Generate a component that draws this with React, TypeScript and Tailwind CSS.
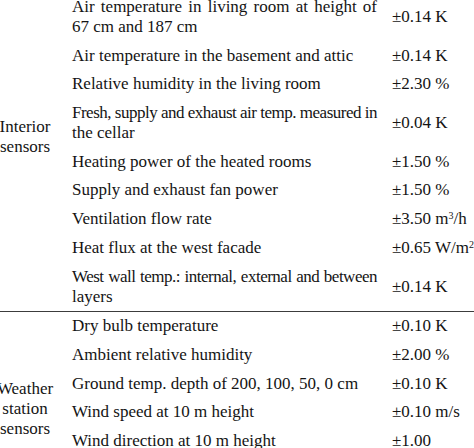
import React from 'react'

type Row = { label: string | [string, string]; tight?: boolean; value: React.ReactNode }

const interior: Row[] = [
  { label: ['Air temperature in living room at height of', '67 cm and 187 cm'], value: '±0.14 K' },
  { label: 'Air temperature in the basement and attic', value: '±0.14 K' },
  { label: 'Relative humidity in the living room', value: '±2.30 %' },
  { label: ['Fresh, supply and exhaust air temp. measured in', 'the cellar'], tight: true, value: '±0.04 K' },
  { label: 'Heating power of the heated rooms', value: '±1.50 %' },
  { label: 'Supply and exhaust fan power', value: '±1.50 %' },
  {
    label: 'Ventilation flow rate',
    value: (
      <>
        ±3.50 m<sup className="text-[10px]">3</sup>/h
      </>
    ),
  },
  {
    label: 'Heat flux at the west facade',
    value: (
      <>
        ±0.65 W/m<sup className="text-[10px]">2</sup>
      </>
    ),
  },
  { label: ['West wall temp.: internal, external and between', 'layers'], tight: true, value: '±0.14 K' },
]

const weather: Row[] = [
  { label: 'Dry bulb temperature', value: '±0.10 K' },
  { label: 'Ambient relative humidity', value: '±2.00 %' },
  { label: 'Ground temp. depth of 200, 100, 50, 0 cm', value: '±0.10 K' },
  { label: 'Wind speed at 10 m height', value: '±0.10 m/s' },
  { label: 'Wind direction at 10 m height', value: '±1.00' },
]

function Rows({ rows }: { rows: Row[] }) {
  return (
    <div className="flex flex-col">
      {rows.map((r, i) => (
        <div key={i} className="flex items-center py-[4.35px]">
          <div className="w-[320px] shrink-0 pr-[15px]">
            {Array.isArray(r.label) ? (
              <>
                <div
                  className={
                    r.tight
                      ? 'text-justify tracking-[-0.5px] [text-align-last:justify]'
                      : 'text-justify [text-align-last:justify]'
                  }
                >
                  {r.label[0]}
                </div>
                <div>{r.label[1]}</div>
              </>
            ) : (
              r.label
            )}
          </div>
          <div className="whitespace-nowrap">{r.value}</div>
        </div>
      ))}
    </div>
  )
}

export default function App() {
  return (
    <div className="h-[448px] w-[474px] overflow-hidden bg-white font-['Liberation_Serif',serif] text-[17px] leading-[20px] text-[#141414]">
      <div className="-ml-[22px] -mt-[7.35px] w-[560px]">
        {/* interior block */}
        <div className="flex">
          <div className="w-[94px] shrink-0 pt-[124.35px] text-center">
            Interior
            <br />
            sensors
          </div>
          <Rows rows={interior} />
        </div>

        {/* weather station block */}
        <div className="flex border-t-[1.5px] border-[#3c3c3c]">
          <div className="w-[94px] shrink-0 pt-[67.5px] text-center">
            Weather
            <br />
            station
            <br />
            sensors
          </div>
          <Rows rows={weather} />
        </div>
      </div>
    </div>
  )
}
